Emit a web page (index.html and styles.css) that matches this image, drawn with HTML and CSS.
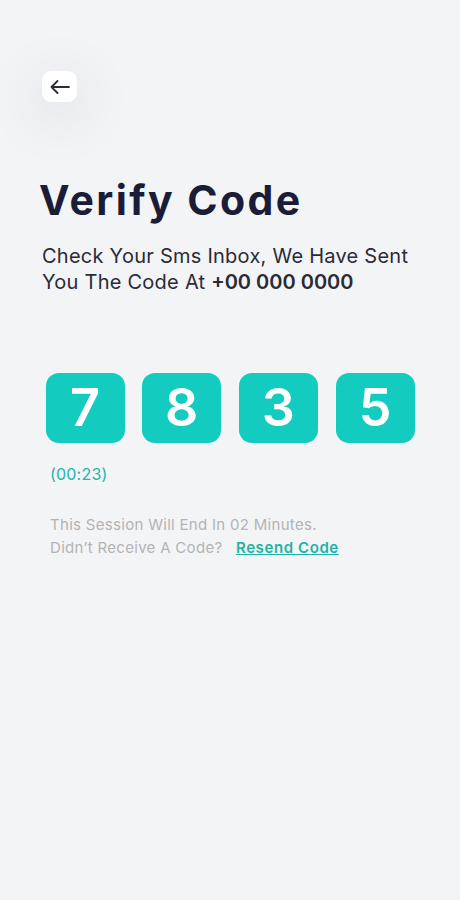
FILE: index.html
```html
<!DOCTYPE html>
<html lang="en">
<head>
<meta charset="utf-8">
<title>Verify Code</title>
<link rel="stylesheet" href="styles.css">
</head>
<body>
<main class="screen">
  <button class="back" aria-label="Back">
    <svg width="20" height="14" viewBox="0 0 20 14" fill="none" stroke="#2b2b33" stroke-width="1.8" stroke-linecap="round" stroke-linejoin="round">
      <path d="M19 7H1.5M7.5 1L1.5 7l6 6"/>
    </svg>
  </button>
  <h1 class="title">Verify Code</h1>
  <p class="subtitle">Check Your Sms Inbox, We Have Sent You The Code At <strong>+00 000 0000</strong></p>
  <div class="otp">
    <div class="digit">7</div>
    <div class="digit">8</div>
    <div class="digit">3</div>
    <div class="digit">5</div>
  </div>
  <p class="timer">(00:23)</p>
  <p class="note">This Session Will End In 02 Minutes.<br>Didn’t Receive A Code? <a class="resend" href="#">Resend Code</a></p>
</main>
</body>
</html>
```

FILE: styles.css
```css
* { box-sizing: border-box; }
html, body { margin: 0; padding: 0; background: #f3f4f6; }
body { font-family: "Inter", "Noto Sans", sans-serif; }
.screen { width: 460px; min-height: 900px; padding: 71px 0 0 0; }
.back {
  display: flex; align-items: center; justify-content: center;
  margin-left: 42px; width: 35px; height: 31px; border: none; border-radius: 9px;
  background: #ffffff; padding: 0;
  box-shadow: 0 12px 40px 16px rgba(120, 125, 140, 0.08);
}
.title {
  margin: 70px 0 0 39px; font-size: 41px; font-weight: 700; color: #1b1c37;
  line-height: 56px; letter-spacing: 2.4px;
}
.subtitle {
  margin: 15px 0 0 42px; width: 380px; font-size: 20px; line-height: 26px; color: #2a2b36;
  font-weight: 400; letter-spacing: 0.25px;
}
.subtitle strong { font-weight: 600; color: #2a2b36; letter-spacing: 0; }
.otp {
  display: flex; gap: 17.7px; margin: 78px 0 0 45.5px;
}
.digit {
  width: 79px; height: 70px; border-radius: 13px; background: #13cbbf;
  color: #fff; font-size: 52px; font-weight: 600; display: flex;
  align-items: center; justify-content: center; line-height: 1;
}
.timer { margin: 20px 0 0 50px; font-size: 16px; color: #21b6ab; line-height: 22px; letter-spacing: 0.2px; }
.note { margin: 28px 0 0 50px; font-size: 15px; line-height: 23px; color: #b3b3b5; letter-spacing: 0.3px; }
.resend { color: #1fb2a7; font-weight: 600; text-decoration: underline; margin-left: 9px; letter-spacing: 0.6px; }
```
